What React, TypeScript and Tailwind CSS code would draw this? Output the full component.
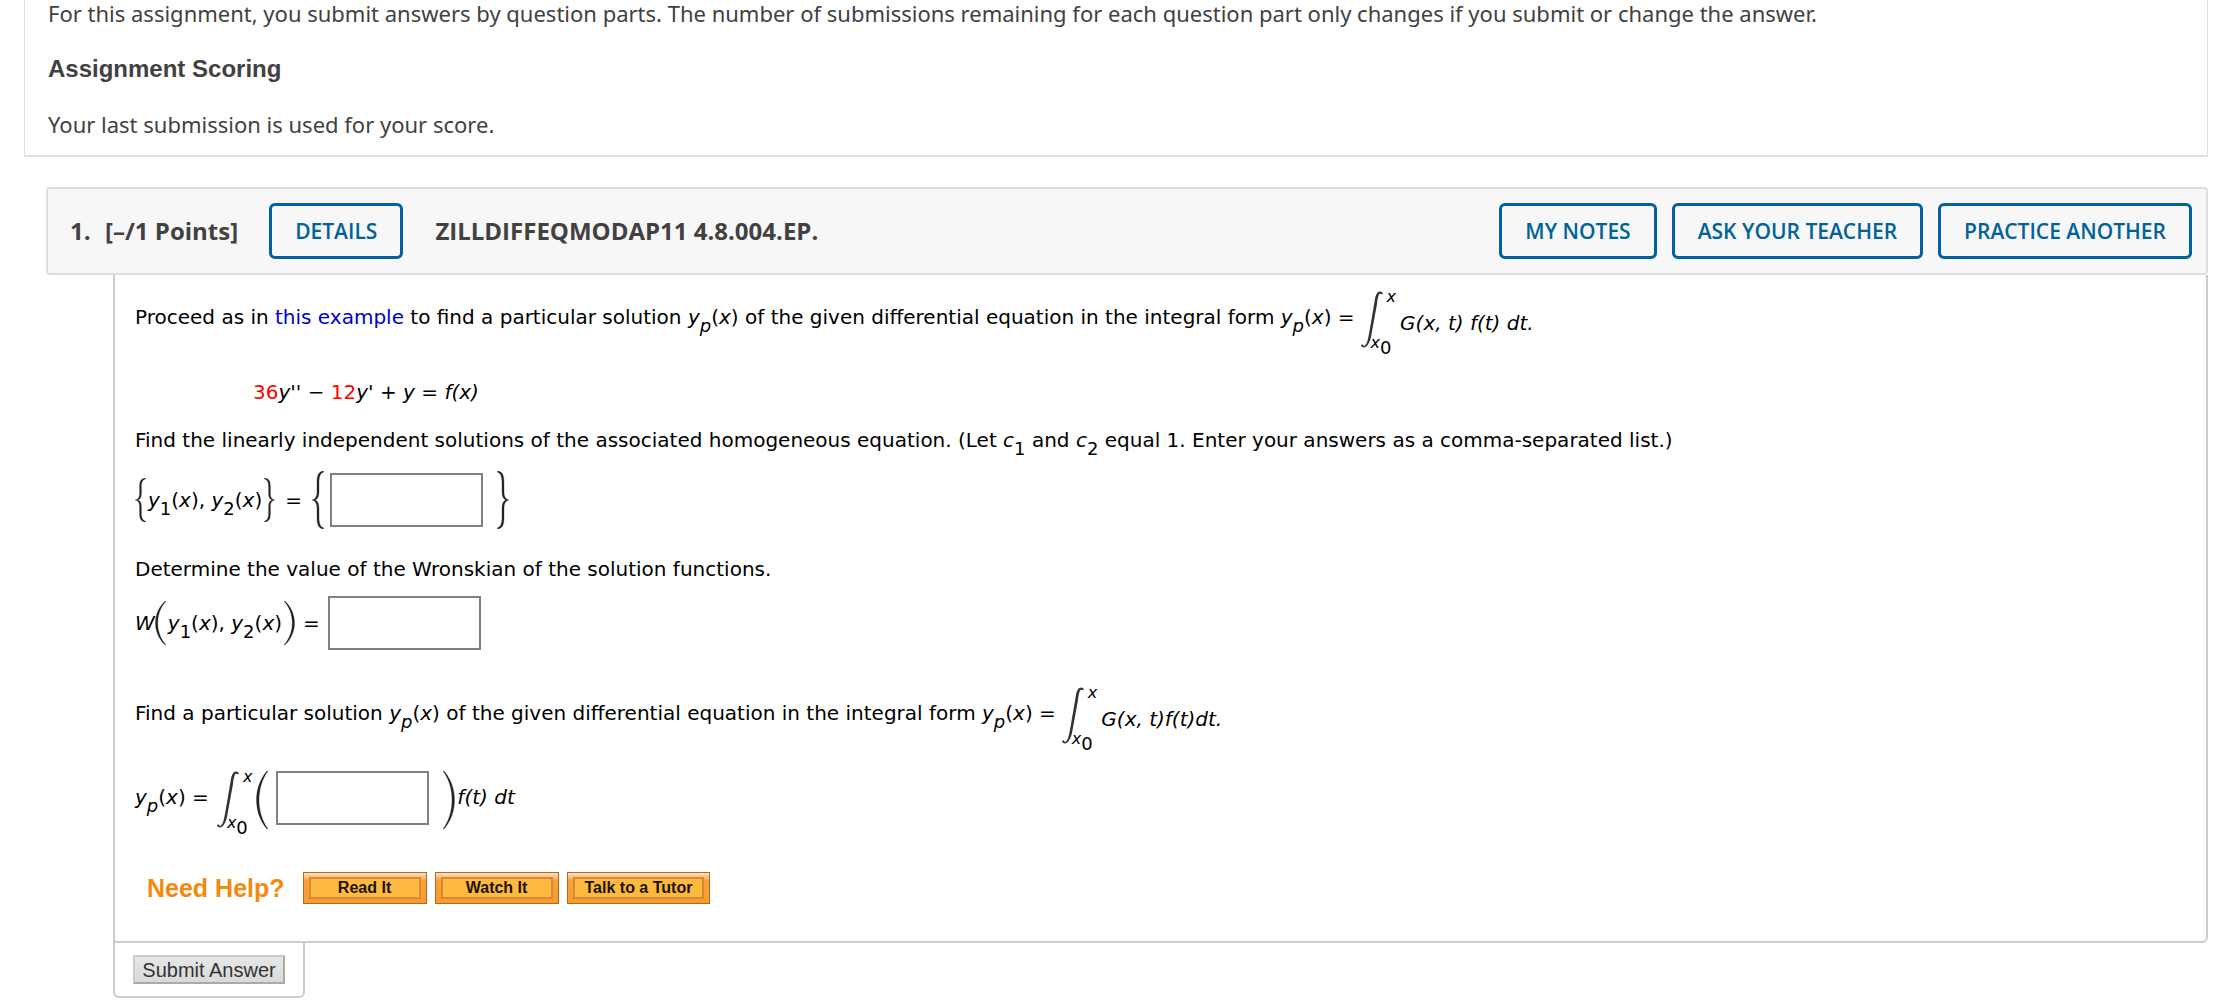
import type { ReactNode } from "react";

function HeaderButton({ children }: { children: ReactNode }) {
  return (
    <button
      type="button"
      className="h-14 shrink-0 rounded-md border-3 border-[#006298] px-[23px] text-[21px] font-semibold whitespace-nowrap text-[#006298]"
    >
      {children}
    </button>
  );
}

function HelpButton({ children }: { children: ReactNode }) {
  return (
    <button
      type="button"
      className="h-8 min-w-[124px] border border-[#b4691a] bg-linear-to-b from-[#fde0c2] via-[#f9a03c] via-25% to-[#f99a2e] px-[5px] py-1 font-['Liberation_Sans',sans-serif] text-base font-bold text-[#201400]"
    >
      <span className="flex h-full items-center justify-center border-2 border-[#d58a34] bg-[#fdb940] px-2.5">
        {children}
      </span>
    </button>
  );
}

// Stretchable brackets, drawn as filled shapes so the ends taper.
const fences = {
  "{": "M11 0 C6 1 5 5 5 12 V20 C5 25 4 28 0 29 C4 30 5 33 5 38 V46 C5 53 6 57 11 58 L12 57 C8 56 7 52 7 46 V38 C7 33 6 30 3 29 C6 28 7 25 7 20 V12 C7 6 8 2 12 1 Z",
  "}": "M1 0 C6 1 7 5 7 12 V20 C7 25 8 28 12 29 C8 30 7 33 7 38 V46 C7 53 6 57 1 58 L0 57 C4 56 5 52 5 46 V38 C5 33 6 30 9 29 C6 28 5 25 5 20 V12 C5 6 4 2 0 1 Z",
  "(": "M11 0 C-3 16 -3 42 11 58 L12 58 C0 42 0 16 12 0 Z",
  ")": "M1 0 C15 16 15 42 1 58 L0 58 C12 42 12 16 0 0 Z",
};

function Fence({ kind, tall }: { kind: keyof typeof fences; tall?: boolean }) {
  return (
    <svg
      viewBox="0 0 12 58"
      preserveAspectRatio="none"
      className={tall ? "h-[58px] w-3 shrink-0" : "h-[44px] w-[11px] shrink-0"}
      fill="#222"
      stroke="#222"
      strokeWidth="0.3"
      aria-hidden="true"
    >
      <path d={fences[kind]} />
    </svg>
  );
}

function Integral() {
  return (
    <span className="inline-flex h-[62px] items-start">
      <svg viewBox="0 0 22 57" className="h-[57px] w-[22px]" fill="#333" aria-hidden="true">
        <path d="M22 3 L21 1 C17 -1 15 3 14 8 L9 37 C7 49 6 54 3 55 L1 53 L0 55 C4 59 8 54 10 46 L16 13 C17 5 18 2 20 3 Z" />
      </svg>
      <span className="-ml-3 flex h-full flex-col justify-between text-base leading-5 italic">
        <span className="-mt-1 pl-4">x</span>
        <span>
          x<span className="relative top-1.5 text-lg leading-4 not-italic">0</span>
        </span>
      </span>
    </span>
  );
}

function Sub({ children }: { children: ReactNode }) {
  return <span className="relative top-2 text-lg leading-none">{children}</span>;
}

function Yp() {
  return (
    <>
      <i>y</i>
      <Sub>
        <i>p</i>
      </Sub>
      (<i>x</i>)
    </>
  );
}

function SolutionPair() {
  return (
    <span className="px-0.5">
      <i>y</i>
      <Sub>1</Sub>(<i>x</i>), <i>y</i>
      <Sub>2</Sub>(<i>x</i>)
    </span>
  );
}

function AnswerBox({ label }: { label: string }) {
  return (
    <input
      type="text"
      aria-label={label}
      className="h-[54px] w-[153px] border-2 border-[#808080] bg-white px-2 outline-none"
    />
  );
}

export default function App() {
  return (
    <div className="min-h-screen bg-white pr-[19px] pl-6 font-['Open_Sans',sans-serif] text-[#414141]">
      <section className="flex flex-col border-x border-b-2 border-[#e0e0e0] px-[23px] pb-[18px] font-['Noto_Sans',sans-serif] text-[22px] leading-[26px]">
        <p>
          For this assignment, you submit answers by question parts. The number of submissions remaining for each
          question part only changes if you submit or change the answer.
        </p>
        <h2 className="mt-[29px] font-['Liberation_Sans',sans-serif] text-2xl leading-7 font-bold">
          Assignment Scoring
        </h2>
        <p className="mt-7">Your last submission is used for your score.</p>
      </section>

      <main className="mt-[30px] ml-[22px]">
        <header className="flex items-center rounded border-2 border-[#dedede] bg-[#f7f7f7] py-3.5 pr-3.5 pl-[22px] text-2xl font-bold">
          <span className="w-[35px]">1.</span>
          <span className="mr-[31px]">[–/1 Points]</span>
          <HeaderButton>DETAILS</HeaderButton>
          <span className="ml-8">ZILLDIFFEQMODAP11 4.8.004.EP.</span>
          <div className="ml-auto flex gap-[15px]">
            <HeaderButton>MY NOTES</HeaderButton>
            <HeaderButton>ASK YOUR TEACHER</HeaderButton>
            <HeaderButton>PRACTICE ANOTHER</HeaderButton>
          </div>
        </header>

        <div className="ml-[67px] font-['DejaVu_Sans',sans-serif] text-xl leading-7 text-black">
          <section className="rounded-br-md border-r-2 border-b-2 border-l-2 border-[#ccc] px-5 pt-4 pb-[37px]">
            <div className="flex h-16">
              <p className="pt-3">
                Proceed as in{" "}
                <a href="#example" className="text-[#0000cc]">
                  this example
                </a>{" "}
                to find a particular solution <Yp /> of the given differential equation in the integral form <Yp /> =
              </p>
              <span className="ml-1.5">
                <Integral />
              </span>
              <i className="ml-1 pt-[18px]">G(x, t) f(t) dt.</i>
            </div>
            <p className="mt-[23px] pl-[118px]">
              <span className="text-[#f00]">36</span>
              <i>y''</i> − <span className="text-[#f00]">12</span>
              <i>y'</i> + <i>y</i> = <i>f(x)</i>
            </p>
            <p className="mt-5">
              Find the linearly independent solutions of the associated homogeneous equation. (Let <i>c</i>
              <Sub>1</Sub> and <i>c</i>
              <Sub>2</Sub> equal 1. Enter your answers as a comma-separated list.)
            </p>
            <div className="mt-[17px] flex h-[58px] items-center">
              <Fence kind="{" />
              <SolutionPair />
              <Fence kind="}" />
              <span className="mx-2.5">=</span>
              <Fence kind="{" tall />
              <span className="mr-3.5 ml-1.5">
                <AnswerBox label="Independent solutions" />
              </span>
              <Fence kind="}" tall />
            </div>
            <p className="mt-[26px]">Determine the value of the Wronskian of the solution functions.</p>
            <div className="mt-[13px] flex h-[54px] items-center">
              <i>W</i>
              <Fence kind="(" />
              <SolutionPair />
              <Fence kind=")" />
              <span className="mx-2">=</span>
              <AnswerBox label="Wronskian" />
            </div>
            <div className="mt-[37px] flex h-16">
              <p className="pt-3">
                Find a particular solution <Yp /> of the given differential equation in the integral form <Yp /> =
              </p>
              <span className="ml-1.5">
                <Integral />
              </span>
              <i className="ml-1 pt-[18px]">G(x, t)f(t)dt.</i>
            </div>
            <div className="mt-5 flex h-16 items-start">
              <span className="pt-3">
                <Yp /> =
              </span>
              <span className="ml-2">
                <Integral />
              </span>
              <span className="ml-1 flex gap-2">
                <Fence kind="(" tall />
                <AnswerBox label="Integrand" />
              </span>
              <span className="ml-3.5 flex">
                <Fence kind=")" tall />
              </span>
              <i className="ml-0.5 pt-3">f(t) dt</i>
            </div>
            <div className="mt-[37px] flex items-center gap-2 pl-3">
              <span className="mr-2.5 font-['Liberation_Sans',sans-serif] text-[25px] font-bold text-[#f28a10]">
                Need Help?
              </span>
              <HelpButton>Read It</HelpButton>
              <HelpButton>Watch It</HelpButton>
              <HelpButton>Talk to a Tutor</HelpButton>
            </div>
          </section>
          <div className="w-[192px] rounded-b-md border-x-2 border-b-2 border-[#ccc] px-[18px] pt-3 pb-3">
            <button
              type="button"
              className="block h-[29px] w-full border-2 border-t-[#ccc] border-r-[#aaa] border-b-[#aaa] border-l-[#ccc] bg-linear-to-b from-[#e6e6e6] to-[#dadada] font-['Liberation_Sans',sans-serif] text-xl leading-6 whitespace-nowrap text-[#333]"
            >
              Submit Answer
            </button>
          </div>
        </div>
      </main>
    </div>
  );
}
